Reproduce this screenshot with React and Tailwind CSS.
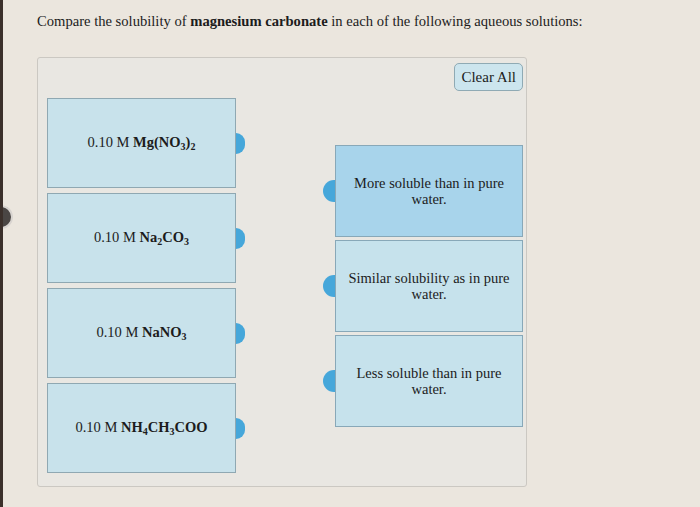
import React from "react";

const Sub = ({ children }) => (
  <sub className="text-[10px] leading-none">{children}</sub>
);

const solutions = [
  { id: "mg", label: <>Mg(NO<Sub>3</Sub>)<Sub>2</Sub></> },
  { id: "na2co3", label: <>Na<Sub>2</Sub>CO<Sub>3</Sub></> },
  { id: "nano3", label: <>NaNO<Sub>3</Sub></> },
  { id: "nh4", label: <>NH<Sub>4</Sub>CH<Sub>3</Sub>COO</> },
];

const answers = [
  { id: "more", text: "More soluble than in pure water.", active: true },
  { id: "same", text: "Similar solubility as in pure water." },
  { id: "less", text: "Less soluble than in pure water." },
];

const SolutionCard = ({ label }) => (
  <div className="flex items-center">
    <div className="w-[189px] h-[90px] flex items-center justify-center border border-[#8fa8b2] bg-[#c8e2eb] text-[14.5px]">
      <span>
        0.10 M <b>{label}</b>
      </span>
    </div>
    <div className="w-[9px] h-[21px] rounded-r-full bg-[#46a7da]" />
  </div>
);

const AnswerCard = ({ text, active }) => (
  <div className="flex items-center">
    <div className="w-[12px] h-[22px] rounded-l-full bg-[#46a7da]" />
    <div
      className={`w-[188px] h-[92px] flex items-center justify-center px-3 text-center text-[14.5px] leading-[16px] border border-[#88a8b8] ${
        active ? "bg-[#a8d4eb]" : "bg-[#c6e2ec]"
      }`}
    >
      {text}
    </div>
  </div>
);

export default function App() {
  return (
    <div className="relative w-[700px] h-[507px] overflow-hidden bg-[#ebe6de] border-l-[3px] border-[#3b302b] text-[#1c1c1c] font-['Liberation_Serif',serif]">
      <div className="absolute -left-[14px] top-[205px] w-[24px] h-[24px] rounded-full bg-[#4a4644] border-2 border-[#d8d4d0]" />

      <div className="pl-[34px] pt-[12px]">
        <p className="text-[14.6px] leading-[18px]">
          Compare the solubility of <b>magnesium carbonate</b> in each of the
          following aqueous solutions:
        </p>

        <div className="mt-[27px] w-[490px] h-[430px] border border-[#cbc8c2] rounded-[3px] bg-[#e9e7e2] pl-[9px] pr-[3px] pt-[5px]">
          <div className="flex justify-end">
            <button className="h-[28px] px-[6px] rounded-[5px] border border-[#8faab4] bg-[#cce5ee] text-[15px] text-[#1c1c1c]">
              Clear All
            </button>
          </div>

          <div className="flex mt-[7px]">
            <div className="flex flex-col gap-[5px]">
              {solutions.map((s) => (
                <SolutionCard key={s.id} label={s.label} />
              ))}
            </div>
            <div className="ml-[78px] mt-[47px] flex flex-col gap-[3px]">
              {answers.map((a) => (
                <AnswerCard key={a.id} text={a.text} active={a.active} />
              ))}
            </div>
          </div>
        </div>
      </div>
    </div>
  );
}
